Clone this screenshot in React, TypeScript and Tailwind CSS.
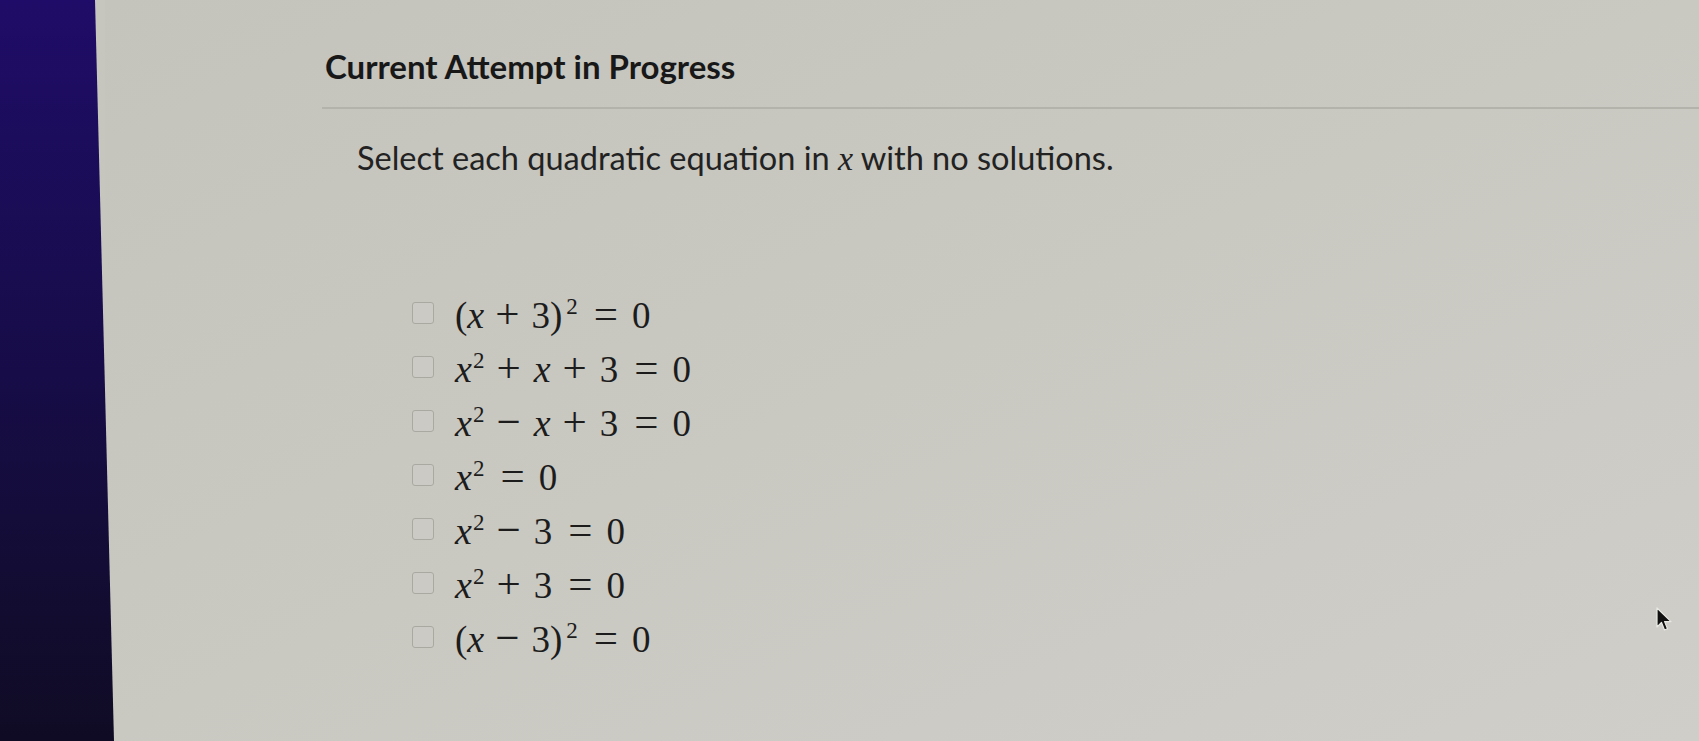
import React from "react"

type Tok = { t: string; k: "v" | "n" | "sup" | "op" | "eq"; c?: string }

// each equation as tokens; c overrides the default spacing where the reference differs
const rows: Tok[][] = [
  [
    { t: "(", k: "n" },
    { t: "x", k: "v" },
    { t: "+", k: "op", c: "ml-[11px] mr-[12px]" },
    { t: "3", k: "n" },
    { t: ")", k: "n" },
    { t: "2", k: "sup", c: "ml-[4px]" },
    { t: "=", k: "eq" },
    { t: "0", k: "n" },
  ],
  [
    { t: "x", k: "v" },
    { t: "2", k: "sup" },
    { t: "+", k: "op" },
    { t: "x", k: "v" },
    { t: "+", k: "op" },
    { t: "3", k: "n" },
    { t: "=", k: "eq" },
    { t: "0", k: "n" },
  ],
  [
    { t: "x", k: "v" },
    { t: "2", k: "sup" },
    { t: "\u2212", k: "op" },
    { t: "x", k: "v" },
    { t: "+", k: "op" },
    { t: "3", k: "n" },
    { t: "=", k: "eq" },
    { t: "0", k: "n" },
  ],
  [
    { t: "x", k: "v" },
    { t: "2", k: "sup" },
    { t: "=", k: "eq" },
    { t: "0", k: "n" },
  ],
  [
    { t: "x", k: "v" },
    { t: "2", k: "sup" },
    { t: "\u2212", k: "op" },
    { t: "3", k: "n" },
    { t: "=", k: "eq" },
    { t: "0", k: "n" },
  ],
  [
    { t: "x", k: "v" },
    { t: "2", k: "sup" },
    { t: "+", k: "op" },
    { t: "3", k: "n" },
    { t: "=", k: "eq" },
    { t: "0", k: "n" },
  ],
  [
    { t: "(", k: "n" },
    { t: "x", k: "v" },
    { t: "\u2212", k: "op", c: "ml-[11px] mr-[12px]" },
    { t: "3", k: "n" },
    { t: ")", k: "n" },
    { t: "2", k: "sup", c: "ml-[4px]" },
    { t: "=", k: "eq" },
    { t: "0", k: "n" },
  ],
]

function Token({ tok }: { tok: Tok }) {
  if (tok.k === "sup")
    return <sup className={`top-[-0.64em] text-[23px] ${tok.c ?? "ml-[1px]"}`}>{tok.t}</sup>
  if (tok.k === "v") return <span className={`text-[38px] italic leading-[20px] ${tok.c ?? ""}`}>{tok.t}</span>
  if (tok.k === "op")
    return <span className={`text-[43px] leading-[20px] ${tok.c ?? "ml-[12px] mr-[13px]"}`}>{tok.t}</span>
  if (tok.k === "eq")
    return <span className={`text-[43px] leading-[20px] ${tok.c ?? "ml-[16px] mr-[14px]"}`}>{tok.t}</span>
  return <span>{tok.t}</span>
}

function Cursor() {
  return (
    <svg className="absolute left-[1655px] top-[607px]" width="20" height="26" viewBox="0 0 20 26">
      <path
        d="M2 1 L2 20 L6.5 15.5 L9.5 23 L12.5 21.8 L9.6 14.6 L16 14.6 Z"
        fill="#111"
        stroke="#e9e9e4"
        strokeWidth="1.2"
        strokeLinejoin="round"
      />
    </svg>
  )
}

export default function App() {
  return (
    <div className="relative flex h-[741px] w-[1699px] overflow-hidden bg-[#c6c5be]">
      <div className="w-[114px] shrink-0 bg-gradient-to-b from-[#1f0c68] via-[#170c48] to-[#100b24] [clip-path:polygon(0_0,95px_0,114px_100%,0_100%)]" />
      <div className="-ml-[9px] flex-1 bg-gradient-to-br from-[#c4c3bc] via-[#c9c8c1] to-[#cfcec9] pt-[47px]">
        <h1 className="pl-[220px] font-['Lato','Noto_Sans',sans-serif] text-[33px] font-bold leading-[1.2] text-[#181818]">
          Current Attempt in Progress
        </h1>
        <div className="ml-[217px] mt-[20px] h-full border-t-2 border-[#b3b2ab] pl-[35px] pt-[29px]">
          <p className="font-['Lato','Noto_Sans',sans-serif] text-[32.5px] leading-[1.2] text-[#222]">
            Select each quadratic equation in{" "}
            <span className="font-['Liberation_Serif',serif] text-[34px] italic">x</span> with no solutions.
          </p>
          <ul className="ml-[55px] mt-[116px]">
            {rows.map((r, i) => (
              <li key={i} className="flex h-[54px] items-start">
                <span className="mt-[7px] h-[22px] w-[22px] shrink-0 rounded-[3px] border-[1.5px] border-[#a9a8a1] bg-[#cbcac4]" />
                <span className="ml-[21px] mt-[1px] font-['Liberation_Serif',serif] text-[37px] leading-[40px] text-[#1c1c1c]">
                  {r.map((tok, j) => (
                    <Token key={j} tok={tok} />
                  ))}
                </span>
              </li>
            ))}
          </ul>
        </div>
      </div>
      <Cursor />
    </div>
  )
}
